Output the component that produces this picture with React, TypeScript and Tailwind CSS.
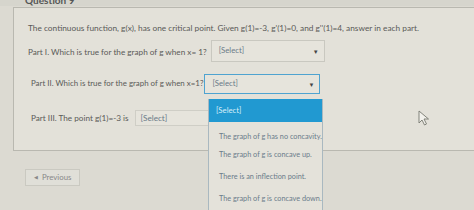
import React from "react";

const font = { fontFamily: "Lato, 'Open Sans', sans-serif" };

function Select({ className = "" }: { className?: string }) {
  return (
    <div className={`flex items-center justify-between border bg-[#e6e4dc] pl-[7px] pr-[5px] text-[7.8px] text-[#6a7a88] ${className}`}>
      <span>[Select]</span>
      <span className="text-[6px] text-[#444]">▼</span>
    </div>
  );
}

export default function App() {
  return (
    <div className="relative h-[210px] w-[474px] overflow-hidden bg-[#dcdad2] text-[#5a5a58]" style={font}>
      <div className="h-[12px] bg-[#d6d5cd] pl-[25px]">
        <div className="-mt-[6px] text-[10px] font-bold leading-[12px] text-[#555]">Question 9</div>
      </div>
      <div className="ml-[13px] mt-[1px] h-[144px] border-l border-t border-b border-[#b9b8b0] bg-[#e3e1d9] pl-[14px] pt-[15px]">
        <div className="h-[10px] text-[8.3px] leading-[10px]">
          The continuous function, g(x), has one critical point. Given g(1)=-3, g'(1)=0, and g''(1)=4, answer in each part.
        </div>
        <div className="mt-[7px] flex items-center gap-[4px] text-[8.2px]">
          <span className="mt-[3px]">Part I. Which is true for the graph of g when x= 1?</span>
          <Select className="h-[22px] w-[114px] border-[#c9c8c0]" />
        </div>
        <div className="mt-[12px] flex items-center gap-[1px] pl-[3px] text-[7.9px]">
          <span>Part II. Which is true for the graph of g when x=1?</span>
          <Select className="h-[20px] w-[116px] border-[#4fa3d0]" />
        </div>
        <div className="mt-[16px] flex items-center gap-[6px] pl-[3px] text-[8.2px]">
          <span>Part III. The point g(1)=-3 is</span>
          <div className="flex h-[16px] w-[90px] items-center border border-[#cfcec6] bg-[#e6e4dc] pl-[5px] text-[#6a7a88]">[Select]</div>
        </div>
      </div>
      <div className="ml-[25px] mt-[18px] flex h-[17px] w-[55px] items-center border border-[#cac9c1] bg-[#e0dfd8] pl-[8px] text-[7.8px] text-[#888]">
        <span className="mr-[4px] text-[5px]">◀</span>Previous
      </div>

      {/* dropdown list */}
      <div className="absolute left-[208px] top-[99px] w-[115px] border-x border-[#a9b8c0] bg-[#e4e2da] text-[7.3px] text-[#6b7c8a]">
        <div className="flex h-[23px] items-center bg-[#2199d1] pl-[7px] text-[7.8px] text-[#d8eef8]">[Select]</div>
        <div className="flex h-[22px] items-center whitespace-nowrap pl-[10px] pt-[8px]">The graph of g has no concavity.</div>
        <div className="flex h-[22px] items-center whitespace-nowrap pl-[10px]">The graph of g is concave up.</div>
        <div className="flex h-[22px] items-center whitespace-nowrap pl-[10px]">There is an inflection point.</div>
        <div className="flex h-[22px] items-center whitespace-nowrap pl-[10px]">The graph of g is concave down.</div>
      </div>

      {/* cursor */}
      <svg className="absolute left-[418px] top-[110px]" width="12" height="16" viewBox="0 0 12 16">
        <path d="M1 1 L1 13 L4 10 L6.5 15 L8.5 14 L6 9 L10.5 9 Z" fill="#f2f1ec" stroke="#77786f" strokeWidth="0.9" />
      </svg>
    </div>
  );
}
